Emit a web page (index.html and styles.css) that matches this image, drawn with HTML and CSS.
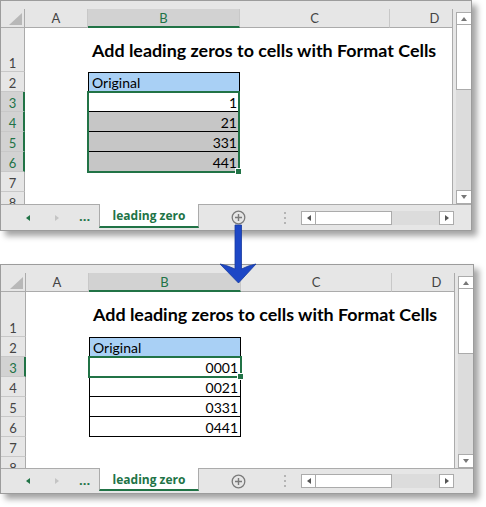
FILE: index.html
```html
<!DOCTYPE html>
<html lang="en">
<head>
<meta charset="utf-8">
<title>Add leading zeros to cells with Format Cells</title>
<link rel="stylesheet" href="styles.css">
</head>
<body>
<main class="page">

  <!-- Worksheet before formatting -->
  <section class="window">
    <div class="strip"></div>
    <div class="sheet">
      <div class="corner"><svg width="14" height="13" viewBox="0 0 14 13"><polygon points="13,0 13,12 0,12" fill="#b8b8b8"/></svg></div>
      <div class="ch">A</div><div class="ch ch--sel">B</div><div class="ch">C</div><div class="ch">D</div>

      <div class="rh">1</div><div class="c"></div><div class="c c--title">Add leading zeros to cells with Format Cells</div>
      <div class="rh">2</div><div class="c"></div><div class="c c--head">Original</div><div class="c"></div><div class="c"></div>
      <div class="rh rh--sel">3</div><div class="c"></div><div class="c c--box c--active">1<span class="selection selection--range"><span class="handle"></span></span></div><div class="c"></div><div class="c"></div>
      <div class="rh rh--sel">4</div><div class="c"></div><div class="c c--box c--shade">21</div><div class="c"></div><div class="c"></div>
      <div class="rh rh--sel">5</div><div class="c"></div><div class="c c--box c--shade">331</div><div class="c"></div><div class="c"></div>
      <div class="rh rh--sel">6</div><div class="c"></div><div class="c c--box c--shade">441</div><div class="c"></div><div class="c"></div>
      <div class="rh">7</div><div class="c"></div><div class="c"></div><div class="c"></div><div class="c"></div>
      <div class="rh">8</div><div class="c"></div><div class="c"></div><div class="c"></div><div class="c"></div>
    </div>
    <div class="vscroll">
      <span class="vbtn"><i class="tri tri--up"></i></span>
      <span class="vthumb"></span>
      <span class="vtrack"></span>
      <span class="vbtn vbtn--down"><i class="tri tri--down"></i></span>
    </div>
    <div class="tabbar">
      <div class="tab-nav">
        <span class="nav nav--prev"></span>
        <span class="nav nav--next"></span>
        <span class="more">...</span>
      </div>
      <div class="tab">leading zero</div>
      <div class="add"><svg width="15" height="15" viewBox="0 0 15 15"><circle cx="7.5" cy="7.5" r="6.3" fill="none" stroke="#7a7a7a" stroke-width="1.3"/><path d="M7.5 4v7M4 7.5h7" stroke="#7a7a7a" stroke-width="1.4"/></svg></div>
      <div class="grip"><i></i><i></i><i></i></div>
      <div class="hscroll">
        <span class="hbtn"><i class="tri tri--left"></i></span>
        <span class="hthumb"></span>
        <span class="htrack"></span>
        <span class="hbtn hbtn--right"><i class="tri tri--right"></i></span>
      </div>
    </div>
  </section>

  <!-- Worksheet after formatting -->
  <section class="window window--after">
    <div class="strip"></div>
    <div class="sheet">
      <div class="corner"><svg width="14" height="13" viewBox="0 0 14 13"><polygon points="13,0 13,12 0,12" fill="#b8b8b8"/></svg></div>
      <div class="ch">A</div><div class="ch ch--sel">B</div><div class="ch">C</div><div class="ch">D</div>

      <div class="rh">1</div><div class="c"></div><div class="c c--title">Add leading zeros to cells with Format Cells</div>
      <div class="rh">2</div><div class="c"></div><div class="c c--head">Original</div><div class="c"></div><div class="c"></div>
      <div class="rh rh--sel">3</div><div class="c"></div><div class="c c--box c--active">0001<span class="selection selection--cell"><span class="handle"></span></span></div><div class="c"></div><div class="c"></div>
      <div class="rh">4</div><div class="c"></div><div class="c c--box">0021</div><div class="c"></div><div class="c"></div>
      <div class="rh">5</div><div class="c"></div><div class="c c--box">0331</div><div class="c"></div><div class="c"></div>
      <div class="rh">6</div><div class="c"></div><div class="c c--box">0441</div><div class="c"></div><div class="c"></div>
      <div class="rh">7</div><div class="c"></div><div class="c"></div><div class="c"></div><div class="c"></div>
      <div class="rh">8</div><div class="c"></div><div class="c"></div><div class="c"></div><div class="c"></div>
    </div>
    <div class="vscroll">
      <span class="vbtn"><i class="tri tri--up"></i></span>
      <span class="vthumb"></span>
      <span class="vtrack"></span>
      <span class="vbtn vbtn--down"><i class="tri tri--down"></i></span>
    </div>
    <div class="tabbar">
      <div class="tab-nav">
        <span class="nav nav--prev"></span>
        <span class="nav nav--next"></span>
        <span class="more">...</span>
      </div>
      <div class="tab">leading zero</div>
      <div class="add"><svg width="15" height="15" viewBox="0 0 15 15"><circle cx="7.5" cy="7.5" r="6.3" fill="none" stroke="#7a7a7a" stroke-width="1.3"/><path d="M7.5 4v7M4 7.5h7" stroke="#7a7a7a" stroke-width="1.4"/></svg></div>
      <div class="grip"><i></i><i></i><i></i></div>
      <div class="hscroll">
        <span class="hbtn"><i class="tri tri--left"></i></span>
        <span class="hthumb"></span>
        <span class="htrack"></span>
        <span class="hbtn hbtn--right"><i class="tri tri--right"></i></span>
      </div>
    </div>
  </section>

  <!-- Down arrow linking the two states -->
  <svg class="flow-arrow" width="486" height="507" viewBox="0 0 486 507">
    <path d="M235 225 H241.5 V269 Q248 265.5 256 264 L238.5 283 L220 264 Q228 265.5 235 269 Z" fill="#1d47c6" stroke="#163a9e" stroke-width="0.8"/>
  </svg>
</main>
</body>
</html>
```

FILE: styles.css
```css
* {
  box-sizing: border-box;
}

html,
body {
  margin: 0;
  background: #fff;
}

body {
  font-family: "Lato", "Liberation Sans", sans-serif;
  color: #000;
}

.page {
  position: relative;
  width: 486px;
  height: 507px;
  display: flex;
  flex-direction: column;
  gap: 33px;
  overflow: hidden;
}

/* ---------- spreadsheet window ---------- */

.window {
  --rh: 24px;
  --col-c: 150px;
  --r1: 44px;
  --tabh: 26px;
  width: 472px;
  height: 231px;
  flex: none;
  border: 1px solid #9c9c9c;
  background: #e6e6e6;
  box-shadow: 5px 5px 6px rgba(0, 0, 0, 0.36);
  display: grid;
  grid-template-columns: 1fr 18px;
  grid-template-rows: 8px 1fr var(--tabh);
}

.window--after {
  --rh: 25px;
  --col-c: 151px;
  --r1: 45px;
  --tabh: 25px;
  width: 474px;
  height: 230px;
}

.strip {
  grid-column: 1;
  grid-row: 1;
}

.sheet {
  grid-column: 1;
  grid-row: 2;
  display: grid;
  grid-template-columns: var(--rh) 63px 152px var(--col-c) 90px;
  grid-template-rows: 19px var(--r1) repeat(7, 20px);
  background: #fff;
  border-right: 1px solid #ababab;
  overflow: hidden;
}

.corner {
  background: #e6e6e6;
  border-right: 1px solid #ababab;
  border-bottom: 1px solid #ababab;
  display: flex;
  align-items: flex-end;
  justify-content: flex-end;
  padding: 0 1px 1px 0;
}

.corner svg {
  display: block;
}

.ch {
  background: #e6e6e6;
  border-right: 1px solid #c8c8c8;
  border-bottom: 1px solid #ababab;
  font-size: 13px;
  color: #444;
  display: flex;
  align-items: center;
  justify-content: center;
}

.ch--sel {
  background: #d2d2d2;
  color: #217346;
  border-bottom: 2px solid #217346;
}

.rh {
  background: #e6e6e6;
  border-right: 1px solid #ababab;
  border-bottom: 1px solid #c8c8c8;
  font-size: 13px;
  line-height: 15px;
  color: #444;
  display: flex;
  align-items: flex-end;
  justify-content: center;
}

.rh--sel {
  background: #d2d2d2;
  color: #217346;
  border-right: 2px solid #217346;
  padding-left: 1px;
}

.c {
  display: flex;
  align-items: flex-end;
  font-size: 14px;
  line-height: 16px;
  padding: 0 2px 0 3px;
  white-space: nowrap;
}

.c--title {
  grid-column: span 3;
  align-items: center;
  font-size: 17.9px;
  line-height: 21px;
  font-weight: 700;
  padding-left: 4px;
}

.c--head {
  background: #a9d0f5;
  border: 1px solid #000;
}

.c--box {
  justify-content: flex-end;
  border: 1px solid #000;
  border-top: none;
}

.c--shade {
  background: #c6c6c6;
}

.c--active {
  position: relative;
  z-index: 1;
}

/* active cell / selected range outline, drawn over the cells below */
.selection {
  position: absolute;
  left: -2px;
  top: -1px;
  width: 153px;
  border: 2px solid #217346;
  pointer-events: none;
}

.selection--range {
  height: 82px;
}

.selection--cell {
  width: 154px;
  height: 22px;
}

.handle {
  position: absolute;
  right: -4px;
  bottom: -4px;
  width: 7px;
  height: 7px;
  background: #217346;
  border: 1px solid #fff;
}

/* ---------- scrollbars ---------- */

.vscroll {
  grid-column: 2;
  grid-row: 1 / 3;
  padding: 11px 0 0 3px;
  display: flex;
  flex-direction: column;
}

.vbtn {
  height: 13px;
  flex: none;
  background: #fff;
  border: 1px solid #ababab;
  border-right: none;
  display: flex;
  align-items: center;
  justify-content: center;
}

.vbtn--down {
  height: 14px;
}

.vthumb {
  height: 65px;
  flex: none;
  background: #fff;
  border: 1px solid #ababab;
  border-top: none;
  border-right: none;
}

.vtrack {
  flex: 1;
  background: #dcdcdc;
}

.tri {
  display: block;
  width: 0;
  height: 0;
}

.tri--up {
  border-left: 3.5px solid transparent;
  border-right: 3.5px solid transparent;
  border-bottom: 4px solid #777;
}

.tri--down {
  border-left: 3.5px solid transparent;
  border-right: 3.5px solid transparent;
  border-top: 4px solid #777;
}

.tri--left {
  border-top: 3.5px solid transparent;
  border-bottom: 3.5px solid transparent;
  border-right: 4px solid #555;
}

.tri--right {
  border-top: 3.5px solid transparent;
  border-bottom: 3.5px solid transparent;
  border-left: 4px solid #555;
}

/* ---------- sheet tab bar ---------- */

.tabbar {
  grid-column: 1 / 3;
  grid-row: 3;
  border-top: 1px solid #ababab;
  display: flex;
  align-items: center;
}

.tab-nav {
  width: 98px;
  flex: none;
  display: flex;
  align-items: center;
  padding-left: 25px;
}

.nav {
  width: 0;
  height: 0;
  border-top: 3.5px solid transparent;
  border-bottom: 3.5px solid transparent;
}

.nav--prev {
  border-right: 4px solid #217346;
}

.nav--next {
  margin-left: 25px;
  border-left: 4px solid #c4c4c4;
}

.more {
  margin-left: 20px;
  font-family: "Open Sans", "Liberation Sans", sans-serif;
  font-weight: 700;
  font-size: 13px;
  line-height: 13px;
  color: #217346;
  padding-bottom: 2px;
}

.tab {
  width: 100px;
  flex: none;
  align-self: stretch;
  margin: -1px 0 2px;
  background: #fff;
  border-left: 1px solid #ababab;
  border-right: 1px solid #ababab;
  border-bottom: 2px solid #217346;
  font-family: "Open Sans", "Liberation Sans", sans-serif;
  font-weight: 700;
  font-size: 12px;
  color: #217346;
  display: flex;
  align-items: center;
  justify-content: center;
  padding-top: 1px;
}

.add {
  width: 78px;
  flex: none;
  display: flex;
  justify-content: center;
}

.add svg {
  display: block;
}

.grip {
  width: 16px;
  flex: none;
  display: flex;
  flex-direction: column;
  align-items: center;
  gap: 3px;
}

.grip i {
  width: 2px;
  height: 2px;
  background: #b4b4b4;
}

.hscroll {
  margin-left: 8px;
  width: 153px;
  height: 14px;
  flex: none;
  display: flex;
}

.hbtn {
  width: 15px;
  flex: none;
  background: #fff;
  border: 1px solid #ababab;
  display: flex;
  align-items: center;
  justify-content: center;
}

.hthumb {
  width: 76px;
  flex: none;
  background: #fff;
  border: 1px solid #ababab;
  border-left: none;
}

.htrack {
  flex: 1;
  background: #dcdcdc;
}

/* ---------- connector arrow ---------- */

.flow-arrow {
  position: absolute;
  left: 0;
  top: 0;
  z-index: 5;
  pointer-events: none;
}
```
